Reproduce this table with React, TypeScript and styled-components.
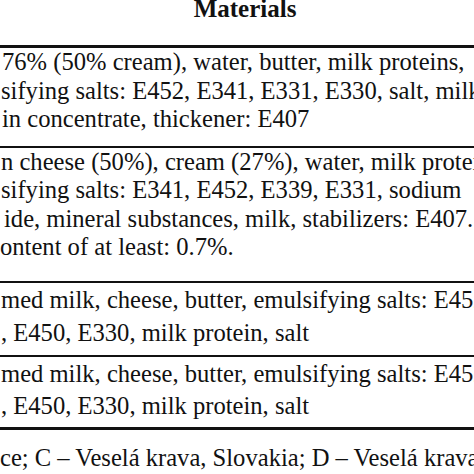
import styled, { createGlobalStyle } from 'styled-components'

const GlobalStyle = createGlobalStyle`
  html,
  body {
    margin: 0;
    padding: 0;
    background: #ffffff;
  }

  body {
    width: 474px;
    height: 474px;
    overflow: hidden;
    font-family: 'Liberation Serif', 'Times New Roman', serif;
    color: #111111;
  }
`

const Page = styled.div`
  width: 474px;
  height: 474px;
  overflow: hidden;
`

const Title = styled.h2`
  margin: 0 0 27px;
  padding-left: 16px;
  font-size: 25px;
  line-height: 18px;
  font-weight: 700;
  text-align: center;
`

const Table = styled.div`
  border-top: 3px solid #111111;
  display: flex;
  flex-direction: column;
`

interface RowProps {
  lineHeight: number
  padTop: number
  padBottom: number
  last?: boolean
}

const Row = styled.div<RowProps>`
  padding: ${({ padTop, padBottom }) => `${padTop}px 0 ${padBottom}px`};
  line-height: ${({ lineHeight }) => lineHeight}px;
  border-bottom: ${({ last }) => (last ? '3px' : '2px')} solid #111111;
`

interface LineProps {
  indent: number
}

const Line = styled.div<LineProps>`
  padding-left: ${({ indent }) => indent}px;
  font-size: 24.6px;
  white-space: nowrap;
`

const Footnote = styled.p`
  margin: 0;
  padding-top: 14px;
  font-size: 24.6px;
  line-height: 28.5px;
  white-space: nowrap;
`

const rows = [
  {
    lineHeight: 28.5,
    padTop: 0,
    padBottom: 12,
    lines: [
      { text: '76% (50% cream), water, butter, milk proteins,', indent: 2 },
      { text: 'sifying salts: E452, E341, E331, E330, salt, milk', indent: 1 },
      { text: 'in concentrate, thickener: E407', indent: 2 },
    ],
  },
  {
    lineHeight: 28.5,
    padTop: 0,
    padBottom: 19,
    lines: [
      { text: 'n cheese (50%), cream (27%), water, milk proteins', indent: 1 },
      { text: 'sifying salts: E341, E452, E339, E331, sodium', indent: 1 },
      { text: 'ide, mineral substances, milk, stabilizers: E407.', indent: 4 },
      { text: 'ontent of at least: 0.7%.', indent: 0 },
    ],
  },
  {
    lineHeight: 33,
    padTop: 0,
    padBottom: 6,
    lines: [
      { text: 'med milk, cheese, butter, emulsifying salts: E452', indent: 1 },
      { text: ', E450, E330, milk protein, salt', indent: 1 },
    ],
  },
  {
    lineHeight: 31.5,
    padTop: 1.5,
    padBottom: 6,
    lines: [
      { text: 'med milk, cheese, butter, emulsifying salts: E452', indent: 1 },
      { text: ', E450, E330, milk protein, salt', indent: 1 },
    ],
  },
]

export default function App() {
  return (
    <Page>
      <GlobalStyle />
      <Title>Materials</Title>
      <Table>
        {rows.map((row, i) => (
          <Row
            key={i}
            lineHeight={row.lineHeight}
            padTop={row.padTop}
            padBottom={row.padBottom}
            last={i === rows.length - 1}
          >
            {row.lines.map((line, j) => (
              <Line key={j} indent={line.indent}>
                {line.text}
              </Line>
            ))}
          </Row>
        ))}
      </Table>
      <Footnote>ce; C – Veselá krava, Slovakia; D – Veselá krava</Footnote>
    </Page>
  )
}
